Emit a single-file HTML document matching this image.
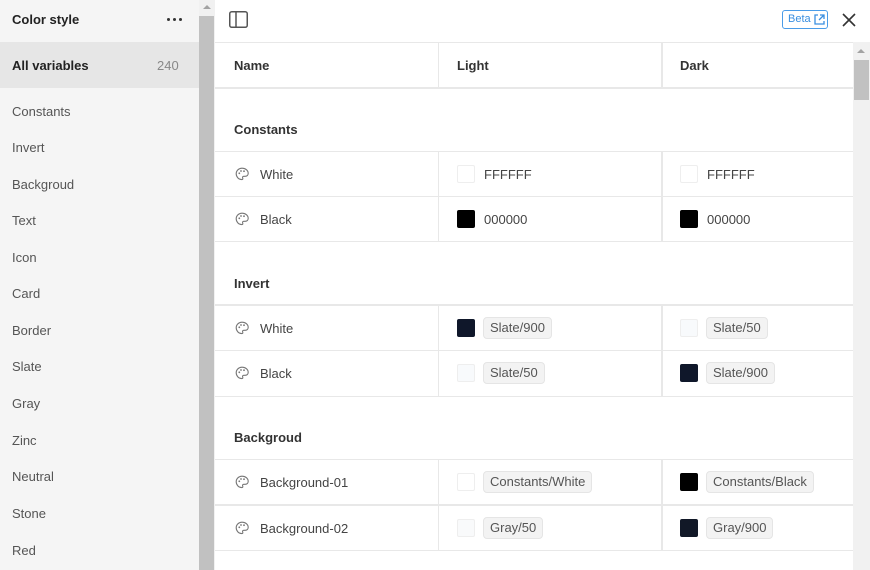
<!DOCTYPE html>
<html><head><style>
*{margin:0;padding:0;box-sizing:border-box}
body{width:870px;height:570px;overflow:hidden;font-family:"Liberation Sans",sans-serif;background:#fff;position:relative;font-size:13px;color:#333}
.side{position:absolute;left:0;top:0;width:199px;height:570px;background:#f5f5f5}
.side .t{position:absolute;left:12px;top:12px;font-weight:bold;font-size:13px;color:#222}
.dots{position:absolute;left:167px;top:18px;width:20px;height:4px}
.dots i{position:absolute;top:0;width:3px;height:3px;border-radius:50%;background:#333}
.all{position:absolute;left:0;top:42px;width:199px;height:46px;background:#e6e6e6}
.all b{position:absolute;left:12px;top:16px;font-size:13px;color:#222}
.all span{position:absolute;left:157px;top:16px;color:#888}
.item{position:absolute;left:12px;color:#555;font-size:13px}
.sb{position:absolute;left:199px;top:0;width:16px;height:570px;background:#f1f1f1}
.sb .th{position:absolute;left:0;top:16px;width:15px;height:554px;background:#c1c1c1}
.sb .ar{position:absolute;left:4px;top:5px;border-left:4px solid transparent;border-right:4px solid transparent;border-bottom:4px solid #a3a3a3}
.rsb{position:absolute;left:853px;top:42px;width:17px;height:528px;background:#f1f1f1}
.rsb .th{position:absolute;left:1px;top:18px;width:15px;height:40px;background:#c1c1c1}
.rsb .ar{position:absolute;left:4px;top:7px;border-left:4px solid transparent;border-right:4px solid transparent;border-bottom:4px solid #a3a3a3}
.hl{position:absolute;height:1px;background:#e8e8e8}
.vl{position:absolute;width:1px;background:#e8e8e8}
.tx{position:absolute;font-size:13px;color:#444}
.hd{position:absolute;font-weight:bold;font-size:13px;color:#333}
.sw{position:absolute;width:18px;height:18px;border-radius:2px}
.chip{position:absolute;height:22px;line-height:20px;padding:0 6px;background:#f3f3f3;border:1px solid #e5e5e5;border-radius:4px;font-size:13px;color:#555}
.pal{position:absolute;width:14px;height:14px}
</style></head><body>
<div class="side">
<div class="t">Color style</div>
<div class="dots"><i style="left:0"></i><i style="left:6px"></i><i style="left:12px"></i></div>
<div class="all"><b>All variables</b><span>240</span></div>
<div class="item" style="top:104px">Constants</div>
<div class="item" style="top:140px">Invert</div>
<div class="item" style="top:177px">Backgroud</div>
<div class="item" style="top:213px">Text</div>
<div class="item" style="top:250px">Icon</div>
<div class="item" style="top:286px">Card</div>
<div class="item" style="top:323px">Border</div>
<div class="item" style="top:359px">Slate</div>
<div class="item" style="top:396px">Gray</div>
<div class="item" style="top:433px">Zinc</div>
<div class="item" style="top:469px">Neutral</div>
<div class="item" style="top:506px">Stone</div>
<div class="item" style="top:543px">Red</div>
</div>
<div class="sb"><div class="ar"></div><div class="th"></div></div>

<svg style="position:absolute;left:229px;top:11px" width="19" height="17" viewBox="0 0 19 17"><rect x="0.75" y="0.75" width="17.5" height="15.5" rx="2" fill="none" stroke="#555" stroke-width="1.5"/><line x1="7" y1="1" x2="7" y2="16" stroke="#555" stroke-width="1.5"/></svg>
<div style="position:absolute;left:782px;top:10px;width:46px;height:19px;border:1px solid #4a9ce8;border-radius:3px;color:#3a8fe0;font-size:11px;line-height:11px;padding:3px 0 0 5px">Beta
<svg style="position:absolute;left:31px;top:3px" width="11" height="11" viewBox="0 0 11 11"><path d="M4 1H1v9h9V7M6 1h4v4M10 1L5 6" fill="none" stroke="#3a8fe0" stroke-width="1.3"/></svg></div>
<svg style="position:absolute;left:842px;top:13px" width="14" height="14" viewBox="0 0 14 14"><path d="M1 1L13 13M13 1L1 13" stroke="#333" stroke-width="1.6"/></svg>

<div class="hl" style="left:215px;top:42px;width:655px"></div>
<div class="hd" style="left:234px;top:58px">Name</div>
<div class="hd" style="left:457px;top:58px">Light</div>
<div class="hd" style="left:680px;top:58px">Dark</div>
<div class="vl" style="left:438px;top:42px;height:46px"></div>
<div class="vl" style="left:661px;top:42px;height:46px;width:2px"></div>
<div class="hl" style="left:215px;top:87px;width:638px;height:2px"></div>

<div class="hd" style="left:234px;top:122px">Constants</div>
<div class="hd" style="left:234px;top:276px">Invert</div>
<div class="hd" style="left:234px;top:430px">Backgroud</div>

<div class="hl" style="left:215px;top:151px;width:638px"></div>
<div class="hl" style="left:215px;top:196px;width:638px"></div>
<div class="hl" style="left:215px;top:241px;width:638px"></div>
<div class="hl" style="left:215px;top:304px;width:638px;height:2px"></div>
<div class="hl" style="left:215px;top:350px;width:638px"></div>
<div class="hl" style="left:215px;top:396px;width:638px"></div>
<div class="hl" style="left:215px;top:459px;width:638px"></div>
<div class="hl" style="left:215px;top:504px;width:638px;height:2px"></div>
<div class="hl" style="left:215px;top:550px;width:638px"></div>

<div class="vl" style="left:438px;top:151px;height:90px"></div><div class="vl" style="left:661px;top:151px;height:90px;width:2px"></div>
<div class="vl" style="left:438px;top:305px;height:91px"></div><div class="vl" style="left:661px;top:305px;height:91px;width:2px"></div>
<div class="vl" style="left:438px;top:459px;height:91px"></div><div class="vl" style="left:661px;top:459px;height:91px;width:2px"></div>

<svg width="0" height="0" style="position:absolute"><defs><g id="p"><path d="M7 1.2C3.8 1.2 1.2 3.6 1.2 6.8c0 3.1 2.5 5.8 5.5 5.8 1 0 1.4-.7 1-1.5-.4-.9 0-1.8 1-1.8h1.5c1.9 0 3-1.3 3-3C13.2 3.4 10.5 1.2 7 1.2z" fill="none" stroke="#777" stroke-width="1.1"/><circle cx="4.3" cy="6.3" r=".9" fill="#777"/><circle cx="6" cy="4" r=".9" fill="#777"/><circle cx="9" cy="4.2" r=".9" fill="#777"/></g></defs></svg>
<svg class="pal" style="left:235px;top:167px"><use href="#p"/></svg>
<svg class="pal" style="left:235px;top:212px"><use href="#p"/></svg>
<svg class="pal" style="left:235px;top:321px"><use href="#p"/></svg>
<svg class="pal" style="left:235px;top:366px"><use href="#p"/></svg>
<svg class="pal" style="left:235px;top:475px"><use href="#p"/></svg>
<svg class="pal" style="left:235px;top:521px"><use href="#p"/></svg>

<div class="tx" style="left:260px;top:167px">White</div>
<div class="tx" style="left:260px;top:212px">Black</div>
<div class="tx" style="left:260px;top:321px">White</div>
<div class="tx" style="left:260px;top:366px">Black</div>
<div class="tx" style="left:260px;top:475px">Background-01</div>
<div class="tx" style="left:260px;top:521px">Background-02</div>

<div class="sw" style="left:457px;top:165px;border:1px solid #eee"></div><div class="tx" style="left:484px;top:167px">FFFFFF</div>
<div class="sw" style="left:680px;top:165px;border:1px solid #eee"></div><div class="tx" style="left:707px;top:167px">FFFFFF</div>
<div class="sw" style="left:457px;top:210px;background:#000"></div><div class="tx" style="left:484px;top:212px">000000</div>
<div class="sw" style="left:680px;top:210px;background:#000"></div><div class="tx" style="left:707px;top:212px">000000</div>

<div class="sw" style="left:457px;top:319px;background:#0f172a"></div><div class="chip" style="left:483px;top:317px">Slate/900</div>
<div class="sw" style="left:680px;top:319px;background:#f8fafc;border:1px solid #eee"></div><div class="chip" style="left:706px;top:317px">Slate/50</div>
<div class="sw" style="left:457px;top:364px;background:#f8fafc;border:1px solid #eee"></div><div class="chip" style="left:483px;top:362px">Slate/50</div>
<div class="sw" style="left:680px;top:364px;background:#0f172a"></div><div class="chip" style="left:706px;top:362px">Slate/900</div>

<div class="sw" style="left:457px;top:473px;border:1px solid #eee"></div><div class="chip" style="left:483px;top:471px">Constants/White</div>
<div class="sw" style="left:680px;top:473px;background:#000"></div><div class="chip" style="left:706px;top:471px">Constants/Black</div>
<div class="sw" style="left:457px;top:519px;background:#f9fafb;border:1px solid #eee"></div><div class="chip" style="left:483px;top:517px">Gray/50</div>
<div class="sw" style="left:680px;top:519px;background:#111827"></div><div class="chip" style="left:706px;top:517px">Gray/900</div>

<div class="rsb"><div class="ar"></div><div class="th"></div></div>
</body></html>
